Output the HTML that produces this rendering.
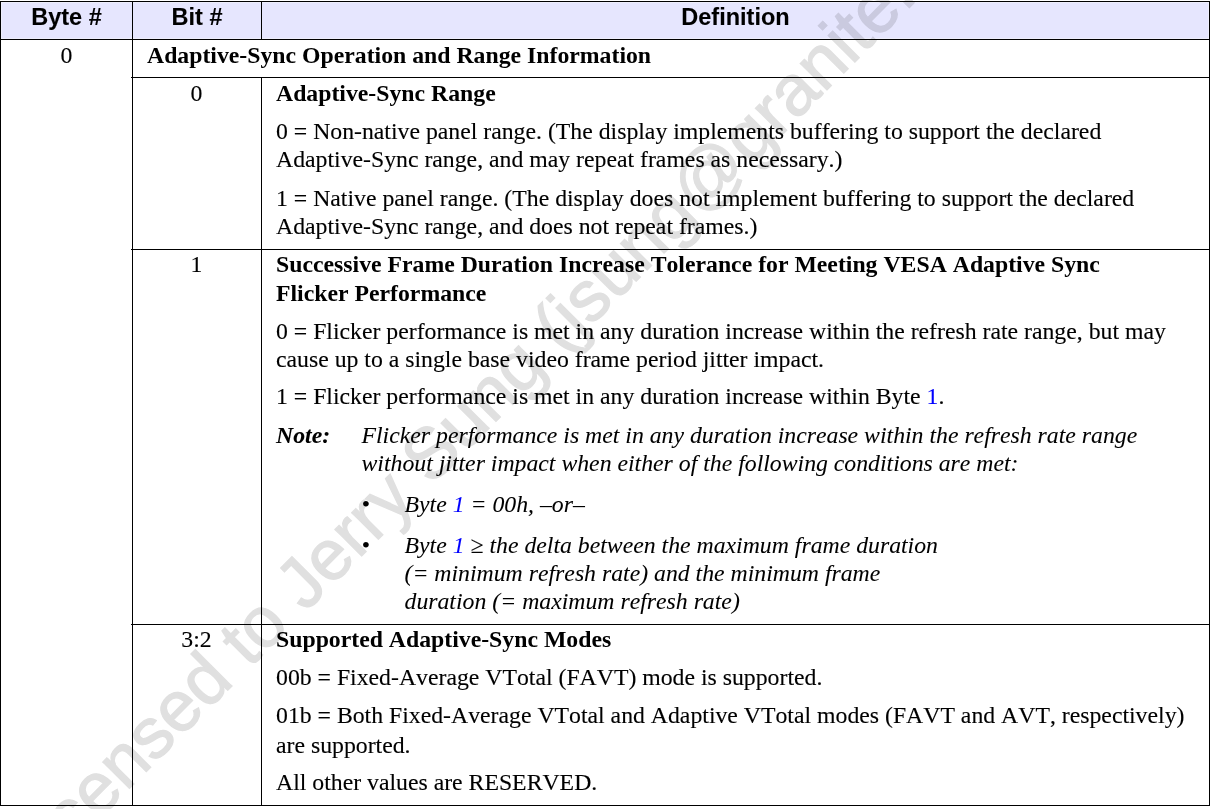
<!DOCTYPE html>
<html><head><meta charset="utf-8"><style>
html,body{margin:0;padding:0;background:#fff;}
body{width:1212px;height:809px;position:relative;overflow:hidden;}
.hd{position:absolute;left:1px;top:2px;width:1208px;height:37px;background:#e6e6fe;box-sizing:border-box;border:1px solid #eeeefc;}
.ru{position:absolute;background:#000;}
.t{position:absolute;height:30px;line-height:30px;white-space:nowrap;color:#000;font-kerning:none;font-feature-settings:"kern" 0,"liga" 0;-webkit-text-stroke:0.12px currentColor;}
.r{font-family:"Liberation Serif",serif;font-size:23.75px;}
.b{font-family:"Liberation Serif",serif;font-size:23.75px;font-weight:bold;-webkit-text-stroke:0px currentColor;}
.i{font-family:"Liberation Serif",serif;font-size:23.75px;font-style:italic;-webkit-text-stroke:0.05px currentColor;}
.bi{font-family:"Liberation Serif",serif;font-size:23.75px;font-weight:bold;font-style:italic;-webkit-text-stroke:0.05px currentColor;}
.hs{font-family:"Liberation Sans",sans-serif;font-size:23.5px;font-weight:bold;-webkit-text-stroke:0.1px currentColor;}
.c{transform:translateX(-50%);}
.bl{color:#0000ff;}
</style></head><body>
<div class="hd"></div>

<div class="ru" style="left:0px;top:1px;width:1210px;height:1px"></div>
<div class="ru" style="left:0px;top:39px;width:1210px;height:1px"></div>
<div class="ru" style="left:131px;top:77px;width:1079px;height:1px"></div>
<div class="ru" style="left:131px;top:249px;width:1079px;height:1px"></div>
<div class="ru" style="left:131px;top:624px;width:1079px;height:1px"></div>
<div class="ru" style="left:0px;top:805px;width:1210px;height:1px"></div>
<div class="ru" style="left:0px;top:1px;width:1px;height:805px"></div>
<div class="ru" style="left:1209px;top:1px;width:1px;height:805px"></div>
<div class="ru" style="left:132px;top:1px;width:1px;height:805px"></div>
<div class="ru" style="left:261px;top:1px;width:1px;height:39px"></div>
<div class="ru" style="left:261px;top:77px;width:1px;height:729px"></div>
<div class="t hs c" style="left:66.5px;top:2px">Byte #</div>
<div class="t hs c" style="left:197px;top:2px">Bit #</div>
<div class="t hs c" style="left:735.5px;top:2px">Definition</div>
<div class="t r c" style="left:66.5px;top:40px">0</div>
<div class="t b" style="left:147px;top:40px">Adaptive-Sync Operation and Range Information</div>
<div class="t r c" style="left:196.5px;top:78px">0</div>
<div class="t b" style="left:276px;top:78px">Adaptive-Sync Range</div>
<div class="t r" style="left:276px;top:116px">0 = Non-native panel range. (The display implements buffering to support the declared</div>
<div class="t r" style="left:276px;top:143.5px">Adaptive-Sync range, and may repeat frames as necessary.)</div>
<div class="t r" style="left:276px;top:183px">1 = Native panel range. (The display does not implement buffering to support the declared</div>
<div class="t r" style="left:276px;top:210.5px">Adaptive-Sync range, and does not repeat frames.)</div>
<div class="t r c" style="left:196.5px;top:248.5px">1</div>
<div class="t b" style="left:276px;top:248.5px">Successive Frame Duration Increase Tolerance for Meeting VESA Adaptive Sync</div>
<div class="t b" style="left:276px;top:277.5px">Flicker Performance</div>
<div class="t r" style="left:276px;top:315.5px">0 = Flicker performance is met in any duration increase within the refresh rate range, but may</div>
<div class="t r" style="left:276px;top:344px">cause up to a single base video frame period jitter impact.</div>
<div class="t r" style="left:276px;top:381px">1 = Flicker performance is met in any duration increase within Byte <span class="bl">1</span>.</div>
<div class="t bi" style="left:276px;top:419.5px">Note:</div>
<div class="t i" style="left:361.5px;top:419.5px">Flicker performance is met in any duration increase within the refresh rate range</div>
<div class="t i" style="left:361.5px;top:448px">without jitter impact when either of the following conditions are met:</div>
<div class="t r c" style="left:366px;top:488.5px">&bull;</div>
<div class="t i" style="left:404.5px;top:488.5px">Byte <span class="bl">1</span> = 00h, &ndash;or&ndash;</div>
<div class="t r c" style="left:366px;top:529.5px">&bull;</div>
<div class="t i" style="left:404.5px;top:529.5px">Byte <span class="bl">1</span> &ge; the delta between the maximum frame duration</div>
<div class="t i" style="left:404.5px;top:557.5px">(= minimum refresh rate) and the minimum frame</div>
<div class="t i" style="left:404.5px;top:585.5px">duration (= maximum refresh rate)</div>
<div class="t r c" style="left:196.5px;top:624px">3:2</div>
<div class="t b" style="left:276px;top:624px">Supported Adaptive-Sync Modes</div>
<div class="t r" style="left:276px;top:662px">00b = Fixed-Average VTotal (FAVT) mode is supported.</div>
<div class="t r" style="left:276px;top:700px">01b = Both Fixed-Average VTotal and Adaptive VTotal modes (FAVT and AVT, respectively)</div>
<div class="t r" style="left:276px;top:729.5px">are supported.</div>
<div class="t r" style="left:276px;top:767px">All other values are RESERVED.</div>
<svg width="1212" height="809" style="position:absolute;left:0;top:0;mix-blend-mode:multiply"><text x="33.7" y="884.6" transform="rotate(-45.05 33.7 884.6)" font-family="Liberation Sans" font-size="71.25" font-weight="normal" fill="#e0e0e0" stroke="#e0e0e0" stroke-width="1.2">Licensed to Jerry Sung (jsung@granite.com)</text></svg>
</body></html>
